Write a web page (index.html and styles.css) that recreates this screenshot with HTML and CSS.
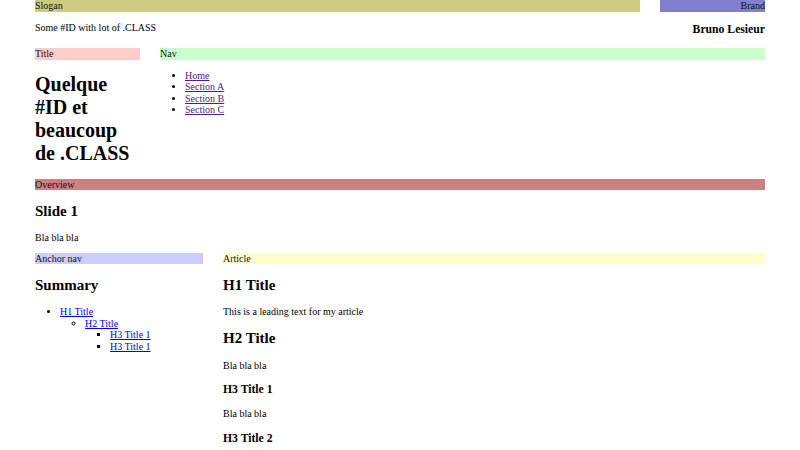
FILE: index.html
```html
<!DOCTYPE html>
<html lang="fr">
<head>
<meta charset="utf-8">
<title>Quelque #ID et beaucoup de .CLASS</title>
<link rel="stylesheet" href="styles.css">
</head>
<body>
<div class="page">
  <header class="row row-header">
    <div class="cell">
      <div class="label label-slogan">Slogan</div>
      <p class="text">Some #ID with lot of .CLASS</p>
    </div>
    <div class="cell brand">
      <div class="label label-brand">Brand</div>
      <h3 class="brand-name">Bruno Lesieur</h3>
    </div>
  </header>
  <div class="row row-title">
    <div class="cell">
      <div class="label label-title">Title</div>
      <h1 class="main-title">Quelque #ID et beaucoup de .CLASS</h1>
    </div>
    <nav class="cell">
      <div class="label label-nav">Nav</div>
      <ul class="list nav-list">
        <li><a href="#" class="visited">Home</a></li>
        <li><a href="#" class="visited">Section A</a></li>
        <li><a href="#" class="visited">Section B</a></li>
        <li><a href="#" class="visited">Section C</a></li>
      </ul>
    </nav>
  </div>
  <section class="overview">
    <div class="label label-overview">Overview</div>
    <h2 class="h2">Slide 1</h2>
    <p class="text last">Bla bla bla</p>
  </section>
  <div class="row row-body">
    <aside class="cell">
      <div class="label label-anchor">Anchor nav</div>
      <h2 class="h2">Summary</h2>
      <ul class="list">
        <li><a href="#" class="link">H1 Title</a>
          <ul class="list sub circle">
            <li><a href="#" class="link">H2 Title</a>
              <ul class="list sub square">
                <li><a href="#" class="link">H3 Title 1</a></li>
                <li><a href="#" class="link">H3 Title 1</a></li>
              </ul>
            </li>
          </ul>
        </li>
      </ul>
    </aside>
    <article class="cell">
      <div class="label label-article">Article</div>
      <h1 class="h2">H1 Title</h1>
      <p class="text">This is a leading text for my article</p>
      <h2 class="h2">H2 Title</h2>
      <p class="text">Bla bla bla</p>
      <h3 class="h3">H3 Title 1</h3>
      <p class="text">Bla bla bla</p>
      <h3 class="h3 end">H3 Title 2</h3>
    </article>
  </div>
</div>
</body>
</html>
```

FILE: styles.css
```css
html, body {
  margin: 0;
  padding: 0;
  background: #ffffff;
}
body {
  font-family: "Liberation Serif", "Times New Roman", serif;
  font-size: 10px;
  color: #000000;
}
.page {
  width: 730px;
  margin: 0 auto;
}
.row {
  display: grid;
  column-gap: 20px;
}
.row-header {
  grid-template-columns: 1fr 105px;
}
.row-title {
  grid-template-columns: 105px 1fr;
}
.row-body {
  grid-template-columns: 168px 1fr;
}
.cell {
  min-width: 0;
}
.label {
  font-size: 10px;
  line-height: 11.5px;
  height: 11.5px;
  color: #111;
}
.label-slogan { background: #cccc80; }
.label-brand { background: #8080cc; text-align: right; }
.label-title { background: #ffcccc; }
.label-nav { background: #ccffcc; }
.label-overview { background: #cc8080; }
.label-anchor { background: #ccccff; }
.label-article { background: #ffffcc; }
.text {
  margin: 10px 0;
  line-height: 11.5px;
}
.text.last {
  margin-bottom: 9px;
}
.brand {
  text-align: right;
}
.brand-name {
  font-size: 11.7px;
  line-height: 13.5px;
  margin: 11.7px 0;
  font-weight: bold;
}
.main-title {
  font-size: 20px;
  line-height: 23px;
  margin: 13.4px 0;
  font-weight: bold;
}
.h2 {
  font-size: 15px;
  line-height: 17.25px;
  margin: 12.45px 0;
  font-weight: bold;
}
.h3 {
  font-size: 11.7px;
  line-height: 13.5px;
  margin: 11.7px 0;
  font-weight: bold;
}
.h3.end {
  margin-bottom: 0;
}
.list {
  margin: 10px 0;
  padding-left: 25px;
  line-height: 11.5px;
  list-style: disc;
}
.list.sub {
  margin: 0;
}
.circle { list-style: circle; }
.square { list-style: square; }
.link { color: #0000ee; }
.visited { color: #551a8b; }
```
